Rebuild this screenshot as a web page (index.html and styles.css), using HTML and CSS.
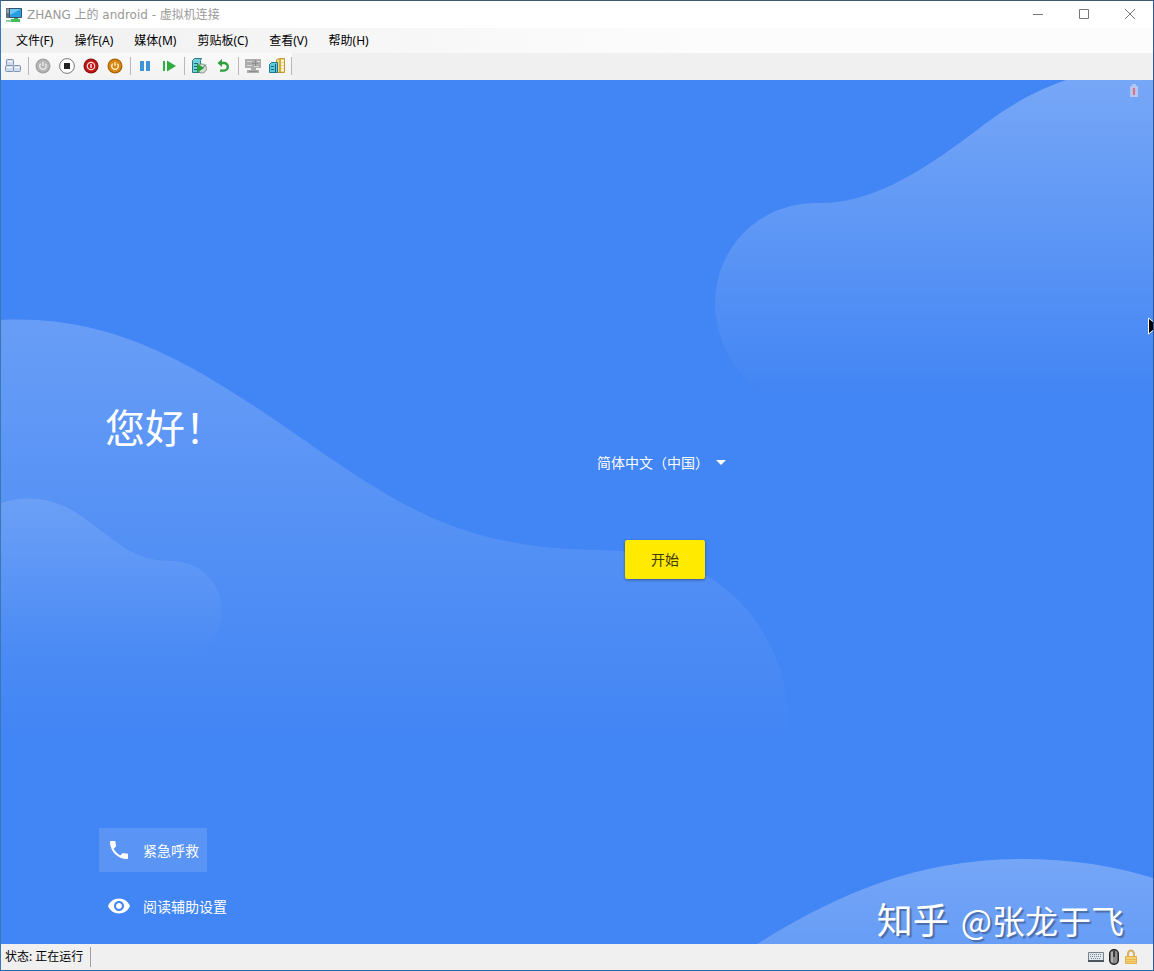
FILE: index.html
```html
<!DOCTYPE html>
<html lang="zh-CN">
<head>
<meta charset="utf-8">
<title>ZHANG 上的 android - 虚拟机连接</title>
<link rel="stylesheet" href="styles.css">
</head>
<body>
<div class="window">
  <header class="titlebar">
    <svg class="app-icon" width="16" height="16" viewBox="0 0 16 16" aria-hidden="true">
      <path d="M0 1h5v10H0z" fill="#66727c"/><path d="M1 3h2M1 5h2" stroke="#c9d2d8"/>
      <path d="M3.500 1.500h12v9h-12z" fill="#2a9de0" stroke="#36536b"/>
      <path d="M4 2h11L4 8z" fill="#6cc9f5"/>
      <path d="M8 11h4v2H8z" fill="#3da35c"/><path d="M5 12h9v3H5z" fill="#43bd59"/><path d="M0 13h5v2H0z" fill="#8bd49a"/>
    </svg>
    <h1 class="title">ZHANG 上的 android - 虚拟机连接</h1>
    <div class="window-controls">
      <button class="control" type="button" aria-label="最小化"><svg width="12" height="12" viewBox="0 0 12 12"><path d="M1 5.500h10"/></svg></button>
      <button class="control" type="button" aria-label="最大化"><svg width="12" height="12" viewBox="0 0 12 12"><path d="M1.500 .5h9v9h-9z"/></svg></button>
      <button class="control" type="button" aria-label="关闭"><svg width="12" height="12" viewBox="0 0 12 12"><path d="M1 0l10 10M11 0L1 10"/></svg></button>
    </div>
  </header>

  <nav class="menubar" aria-label="菜单">
    <button class="menu" type="button">文件(F)</button>
    <button class="menu" type="button">操作(A)</button>
    <button class="menu" type="button">媒体(M)</button>
    <button class="menu" type="button">剪贴板(C)</button>
    <button class="menu" type="button">查看(V)</button>
    <button class="menu" type="button">帮助(H)</button>
  </nav>

  <div class="toolbar-row">
    <div class="toolbar" role="toolbar" aria-label="工具栏">
      <button class="tool" type="button" aria-label="Ctrl+Alt+Del">
        <svg width="16" height="16" viewBox="0 0 16 16"><g fill="#cfdcf2" stroke="#8291b2"><rect x="1.500" y="1.500" width="7" height="6" rx="1"/><rect x=".5" y="7.500" width="8" height="6" rx="1"/><rect x="8.500" y="7.500" width="7" height="6" rx="1"/></g><path d="M3 3.500h4M2 9.500h5M10 9.500h4" stroke="#fff"/></svg>
      </button>
      <span class="separator"></span>
      <button class="tool" type="button" aria-label="启动">
        <svg width="16" height="16" viewBox="0 0 16 16"><circle cx="8" cy="8" r="7.500" fill="#a4a4a4"/><circle cx="8" cy="8" r="6" fill="#b6b6b6"/><path d="M5.700 5.700a3.300 3.300 0 1 0 4.600 0M8 4v4" fill="none" stroke="#eee" stroke-width="1.300"/></svg>
      </button>
      <button class="tool" type="button" aria-label="强行关闭">
        <svg width="16" height="16" viewBox="0 0 16 16"><circle cx="8" cy="8" r="7.400" fill="#fff" stroke="#777"/><path d="M5 5h6v6H5z" fill="#222"/></svg>
      </button>
      <button class="tool" type="button" aria-label="关机">
        <svg width="16" height="16" viewBox="0 0 16 16"><circle cx="8" cy="8" r="7.500" fill="#8f1111"/><circle cx="8" cy="8" r="6.200" fill="#c31919"/><circle cx="8" cy="8" r="3.700" fill="none" stroke="#ffe1dc" stroke-width="1.200"/><path d="M8 6v4" stroke="#fff" stroke-width="1.300"/></svg>
      </button>
      <button class="tool" type="button" aria-label="保存">
        <svg width="16" height="16" viewBox="0 0 16 16"><circle cx="8" cy="8" r="7.500" fill="#a86508"/><circle cx="8" cy="8" r="6.200" fill="#d98713"/><path d="M5.700 5.700a3.300 3.300 0 1 0 4.600 0M8 4v4" fill="none" stroke="#fff4d6" stroke-width="1.300"/></svg>
      </button>
      <span class="separator"></span>
      <button class="tool" type="button" aria-label="暂停">
        <svg width="16" height="16" viewBox="0 0 16 16"><path d="M3 3h4v10H3zM9 3h4v10H9z" fill="#3d94d6"/></svg>
      </button>
      <button class="tool" type="button" aria-label="重置">
        <svg width="16" height="16" viewBox="0 0 16 16"><path d="M2 3h2v10H2zM6 2.500l9 5.500-9 5.500z" fill="#31ac43"/></svg>
      </button>
      <span class="separator"></span>
      <button class="tool" type="button" aria-label="检查点">
        <svg width="16" height="16" viewBox="0 0 16 16"><path d="M1.500 2.500l2-2h7l-1 2v12h-8z" fill="#6fd0dc" stroke="#2b7886"/><path d="M3 5.500h4M3 8.500h4M3 11.500h3" stroke="#226573"/><circle cx="11" cy="10.500" r="4.500" fill="#d3ddd3" stroke="#8b918b"/><path d="M6 5.500l7 4.500-7 5z" fill="#289f38"/><path d="M11 10.500l4-4" stroke="#466c48"/></svg>
      </button>
      <button class="tool" type="button" aria-label="还原">
        <svg width="16" height="16" viewBox="0 0 16 16"><path d="M6 5h3a3.800 3.800 0 0 1 0 7.600H5" fill="none" stroke="#2f9e3f" stroke-width="2.400"/><path d="M2.500 5L7 1v8z" fill="#2f9e3f"/></svg>
      </button>
      <span class="separator"></span>
      <button class="tool" type="button" aria-label="增强会话">
        <svg width="16" height="16" viewBox="0 0 16 16"><path d="M0 1h16v9H0zM6 10h5v3H6zM2 12h12v3H2z" fill="#acacac"/><path d="M2 3.500h5M2 7.500h5M12 3.500h3M9 8.500h5" stroke="#d7d7d7"/><path d="M7 5.500h6M10.500 2v6M4 13.500h8" stroke="#8c8c8c"/></svg>
      </button>
      <button class="tool" type="button" aria-label="共享">
        <svg width="16" height="16" viewBox="0 0 16 16"><path d="M7.500 1.500l3-1h5v14h-8z" fill="#f4d877" stroke="#c39a3c"/><path d="M11 1v14" stroke="#a27e2c"/><path d="M13.500 2v12" stroke="#fff" stroke-width="2" stroke-dasharray="2 1"/><path d="M.5 6.500l2-2h6v10h-8z" fill="#5bcbdc" stroke="#237a90"/><path d="M2 8.500h3M2 11.500h3M6.500 6v8" stroke="#176377"/></svg>
      </button>
      <span class="separator"></span>
    </div>
  </div>

  <main class="screen">
    <svg class="backdrop" viewBox="1 80 1152 864" preserveAspectRatio="none" aria-hidden="true">
      <defs>
        <linearGradient id="fade-top" gradientUnits="userSpaceOnUse" x1="0" y1="80" x2="0" y2="396"><stop offset="0" stop-color="#fff" stop-opacity=".28"/><stop offset="1" stop-color="#fff" stop-opacity="0"/></linearGradient>
        <linearGradient id="fade-left" gradientUnits="userSpaceOnUse" x1="0" y1="320" x2="0" y2="740"><stop offset="0" stop-color="#fff" stop-opacity=".2"/><stop offset="1" stop-color="#fff" stop-opacity="0"/></linearGradient>
        <linearGradient id="fade-small" gradientUnits="userSpaceOnUse" x1="0" y1="498" x2="0" y2="660"><stop offset="0" stop-color="#fff" stop-opacity=".12"/><stop offset="1" stop-color="#fff" stop-opacity="0"/></linearGradient>
        <linearGradient id="fade-bottom" gradientUnits="userSpaceOnUse" x1="0" y1="859" x2="0" y2="944"><stop offset="0" stop-color="#fff" stop-opacity=".27"/><stop offset="1" stop-color="#fff" stop-opacity=".2"/></linearGradient>
      </defs>
      <path fill="url(#fade-top)" d="M1153 80H1066C1010 100 985 125 958 144C915 175 870 203 820 203H815A100 100 0 0 0 715 303C715 340 735 375 765 396H1153Z"/>
      <path fill="url(#fade-left)" d="M1 320C110 314 190 364 260 410C380 490 440 549 600 550L620 551A168 170 0 0 1 788 721V740H1Z"/>
      <path fill="url(#fade-small)" d="M1 503C43 490 72 507 100 530C125 549 140 561 172 561A50 50 0 0 1 222 611C222 635 205 653 180 660H1Z"/>
      <path fill="url(#fade-bottom)" d="M757 944C840 892 920 859 1023 859Q1092 859 1153 878V944Z"/>
    </svg>

    <svg class="battery" width="8" height="13" viewBox="0 0 8 13" role="img" aria-label="电池电量低"><path d="M2 0h4v2h2v11H0V2h2z" fill="#b3c6ef"/><path d="M4 4v7" stroke="#e2707c" stroke-width="2"/></svg>
    <svg class="pointer" width="5" height="19" viewBox="0 0 5 19" aria-hidden="true"><path d="M.5 1v16l5-4V5z" fill="#000" stroke="#fff"/></svg>

    <section class="welcome">
      <h2 class="greeting">您好！</h2>
      <div class="actions">
        <button class="action action-focused" type="button">
          <svg width="24" height="24" viewBox="0 0 24 24" fill="currentColor"><path d="M6.620 10.790c1.440 2.830 3.760 5.140 6.590 6.590l2.200-2.200c.27-.27.67-.36 1.020-.24 1.120.37 2.330.57 3.570.57.55 0 1 .45 1 1V20c0 .55-.45 1-1 1-9.390 0-17-7.610-17-17 0-.55.45-1 1-1h3.500c.55 0 1 .45 1 1 0 1.250.2 2.450.57 3.570.11.35.03.74-.25 1.020l-2.200 2.200z"/></svg>
          紧急呼救
        </button>
        <button class="action" type="button">
          <svg width="24" height="24" viewBox="0 0 24 24" fill="currentColor"><path d="M12 4.500C7 4.500 2.730 7.610 1 12c1.730 4.390 6 7.500 11 7.500s9.270-3.110 11-7.500c-1.730-4.390-6-7.500-11-7.500zM12 17c-2.760 0-5-2.240-5-5s2.240-5 5-5 5 2.240 5 5-2.240 5-5 5zm0-8c-1.660 0-3 1.340-3 3s1.340 3 3 3 3-1.340 3-3-1.340-3-3-3z"/></svg>
          阅读辅助设置
        </button>
      </div>
    </section>

    <section class="setup">
      <div class="setup-form">
        <div class="language">
          <select class="language-select" aria-label="语言"><option>简体中文（中国）</option></select>
          <svg class="caret" width="10" height="5" viewBox="0 0 10 5" aria-hidden="true"><path d="M0 0h10L5 5z" fill="#fff"/></svg>
        </div>
        <button class="start" type="button">开始</button>
      </div>
    </section>

    <p class="watermark"><span class="watermark-brand">知乎</span><span>@张龙于飞</span></p>
  </main>

  <footer class="statusbar">
    <span class="status">状态: 正在运行</span>
    <div class="status-icons">
      <svg width="16" height="16" viewBox="0 0 16 16" role="img" aria-label="键盘"><path d="M.5 3.500h15v9H.5z" fill="#dfe6ec" stroke="#75818d"/><path d="M2 5.500h12M2 7.500h12M3 9.500h10" stroke="#7f8b97" stroke-dasharray="1 1"/><path d="M0 12h16" stroke="#4b5660" stroke-width="2"/></svg>
      <svg width="10" height="16" viewBox="0 0 10 16" role="img" aria-label="鼠标"><rect x=".7" y=".7" width="8.600" height="14.600" rx="4" fill="#8c8c8c" stroke="#222" stroke-width="1.400"/><path d="M3 3v10" stroke="#d4d4d4"/><path d="M5 2v6" stroke="#222" stroke-width="1.500"/></svg>
      <svg width="14" height="16" viewBox="0 0 14 16" role="img" aria-label="已锁定"><path d="M4 8V5a3 3.500 0 0 1 6 0v3" fill="none" stroke="#d4b061" stroke-width="2"/><path d="M1.500 7.500h11v7h-11z" fill="#f5cf70" stroke="#dfb04c"/><path d="M2 10.500h10M2 12.500h10" stroke="#e8b951"/></svg>
    </div>
  </footer>
</div>
</body>
</html>
```
FILE: styles.css
```css
* {
  box-sizing: border-box;
}

body {
  margin: 0;
  font: 12px/16px "Noto Sans", "Noto Sans CJK SC", sans-serif;
  color: #000;
}

button,
select {
  margin: 0;
  padding: 0;
  border: 0;
  background: none;
  font: inherit;
  color: inherit;
}

h1,
h2,
p {
  margin: 0;
  font-weight: 400;
}

svg {
  display: block;
  flex: none;
}

.window {
  display: flex;
  flex-direction: column;
  min-height: 100vh;
  border: 1px solid;
  border-color: #3c5877 #2c5a9b #2468a8 #3878b4;
}

.titlebar {
  display: flex;
  align-items: center;
  height: 27px;
  padding-left: 5px;
  background: #fff;
}

.title {
  flex: 1;
  padding-left: 5px;
  font-family: "DejaVu Sans", "Noto Sans CJK SC", sans-serif;
  font-size: 12px;
  color: #999;
}

.window-controls {
  display: flex;
}

.control {
  display: flex;
  align-items: center;
  justify-content: center;
  width: 46px;
  height: 26px;
}

.control path {
  fill: none;
  stroke: #777;
}

.menubar {
  display: flex;
  gap: 1px;
  height: 25px;
  padding-left: 5px;
  background: linear-gradient(90deg, #f0f0f0, #fcfcfc 60%);
}

.menu {
  padding: 0 10px;
}

.toolbar-row {
  display: flex;
  background: #f0f0f0;
}

.toolbar {
  display: flex;
  align-items: center;
  height: 27px;
  padding-bottom: 2px;
  background: linear-gradient(#fafafa, #f2f2f2);
}

.tool {
  display: flex;
  align-items: center;
  justify-content: center;
  width: 24px;
  height: 24px;
}

.separator {
  width: 1px;
  height: 18px;
  margin: 0 2px 0 3px;
  background: #b8b8b8;
}

.separator:last-child {
  margin: 0 0 0 2px;
}

.screen {
  position: relative;
  display: grid;
  grid-template-columns: 1fr 1fr;
  flex: 1;
  background: #4285f4;
  color: #fff;
  font-family: "Noto Sans CJK SC", sans-serif;
  font-size: 14px;
  line-height: 20px;
}

.backdrop {
  position: absolute;
  inset: 0;
  width: 100%;
  height: 100%;
}

.battery {
  position: absolute;
  top: 4px;
  right: 15px;
}

.pointer {
  position: absolute;
  top: 237px;
  right: 0;
}

.welcome,
.setup {
  position: relative;
  display: flex;
}

.welcome {
  flex-direction: column;
  padding: 0 0 16px 98px;
}

.greeting {
  display: flex;
  flex: 1;
  align-items: center;
  padding: 0 0 56px 6px;
  font-size: 40px;
  line-height: 60px;
}

.actions {
  display: flex;
  flex-direction: column;
  align-items: flex-start;
  gap: 12px;
}

.action {
  display: flex;
  align-items: center;
  gap: 12px;
  height: 44px;
  padding: 0 8px;
}

.action-focused {
  background: rgba(255, 255, 255, 0.13);
}

.setup {
  align-items: center;
  padding: 0 0 4px 20px;
}

.setup-form {
  display: flex;
  flex-direction: column;
  align-items: center;
  gap: 58px;
}

.language {
  position: relative;
}

.language-select {
  height: 40px;
  padding-right: 24px;
  appearance: none;
}

.caret {
  position: absolute;
  top: 18px;
  right: 7px;
  pointer-events: none;
}

.start {
  width: 80px;
  height: 39px;
  border-radius: 2px;
  background: #ffea00;
  color: #40380c;
  box-shadow: 0 1px 3px rgba(0, 0, 0, 0.4);
}

.watermark {
  position: absolute;
  right: 29px;
  bottom: 0;
  display: flex;
  gap: 12px;
  align-items: baseline;
  font-size: 33px;
  line-height: 48px;
  text-shadow: 2px 2px 1px #4a6da8;
}

.watermark-brand {
  font-size: 36px;
}

.statusbar {
  display: flex;
  align-items: center;
  justify-content: space-between;
  height: 26px;
  padding: 0 15px 0 4px;
  background: #f0f0f0;
}

.status {
  padding: 2px 7px 2px 0;
  border-right: 1px solid #a0a0a0;
}

.status-icons {
  display: flex;
  gap: 5px;
}
```
